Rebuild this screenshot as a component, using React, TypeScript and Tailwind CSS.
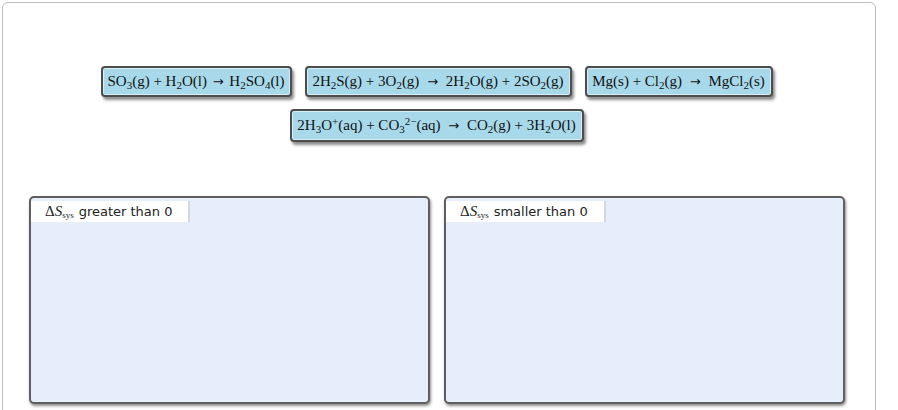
import type { ReactNode } from "react";

const serif = { fontFamily: '"Liberation Serif", "DejaVu Serif", serif' };

function Chip({ width, children }: { width: string; children: ReactNode }) {
  return (
    <div
      className={`${width} flex items-center justify-center rounded-[4px] border-2 border-[#4d4d4d] bg-[#a8d9ea] shadow-[inset_0_0_0_1px_rgba(255,255,255,0.55),2px_3px_3px_rgba(0,0,0,0.45)] text-[15px] leading-none text-[#111] whitespace-nowrap`}
      style={serif}
    >
      <span>{children}</span>
    </div>
  );
}

const Sub = ({ children }: { children: ReactNode }) => (
  <span className="relative top-[3px] text-[11px]">{children}</span>
);
const Sup = ({ children }: { children: ReactNode }) => (
  <span className="relative -top-[5px] text-[11px]">{children}</span>
);
// reaction arrow, a bit longer than the serif font's own glyph
const Arrow = ({ wide }: { wide?: boolean }) => (
  <span
    className={wide ? "mx-[4px] text-[13px]" : "mx-[2px] text-[13px]"}
    style={{ fontFamily: '"DejaVu Sans", sans-serif' }}
  >
    →
  </span>
);

function DropZone({ label }: { label: string }) {
  return (
    <div className="w-[401px] h-[208px] rounded-[5px] border-2 border-[#5f5f5f] bg-[#e6eefc] shadow-[1px_2px_3px_rgba(0,0,0,0.45)] overflow-hidden">
      <div className="inline-flex items-center h-[21px] pl-[14px] pr-[16px] bg-white border-r-2 border-[#d6d6d6] text-[13px] text-[#222]">
        <span style={serif} className="text-[15px] leading-none">
          Δ<i>S</i>
          <span className="relative top-[2px] text-[9px]">sys</span>
        </span>
        <span className="ml-[5px]" style={{ fontFamily: '"DejaVu Sans", Verdana, sans-serif' }}>
          {label}
        </span>
      </div>
    </div>
  );
}

export default function App() {
  return (
    <div className="w-[898px] h-[410px] bg-white overflow-hidden">
      <div className="ml-[2px] mt-[2px] w-[874px] h-[430px] rounded-[6px] border border-[#bdbdbd] bg-white">
        <div className="mt-[63px] ml-[97px] w-[673px] flex flex-wrap justify-center gap-x-[13px] gap-y-[12px]">
          <Chip width="w-[191px] h-[31px]">
            SO<Sub>3</Sub>(g) + H<Sub>2</Sub>O(l) <Arrow /> H<Sub>2</Sub>SO<Sub>4</Sub>(l)
          </Chip>
          <Chip width="w-[267px] h-[31px]">
            2H<Sub>2</Sub>S(g) + 3O<Sub>2</Sub>(g) <Arrow wide /> 2H<Sub>2</Sub>O(g) + 2SO<Sub>2</Sub>(g)
          </Chip>
          <Chip width="w-[188px] h-[31px]">
            Mg(s) + Cl<Sub>2</Sub>(g) <Arrow wide /> MgCl<Sub>2</Sub>(s)
          </Chip>
          <Chip width="w-[294px] h-[33px]">
            2H<Sub>3</Sub>O<Sup>+</Sup>(aq) + CO<Sub>3</Sub>
            <Sup>2−</Sup>(aq) <Arrow wide /> CO<Sub>2</Sub>(g) + 3H<Sub>2</Sub>O(l)
          </Chip>
        </div>
        <div className="mt-[54px] pl-[26px] flex gap-[14px]">
          <DropZone label="greater than 0" />
          <DropZone label="smaller than 0" />
        </div>
      </div>
    </div>
  );
}
